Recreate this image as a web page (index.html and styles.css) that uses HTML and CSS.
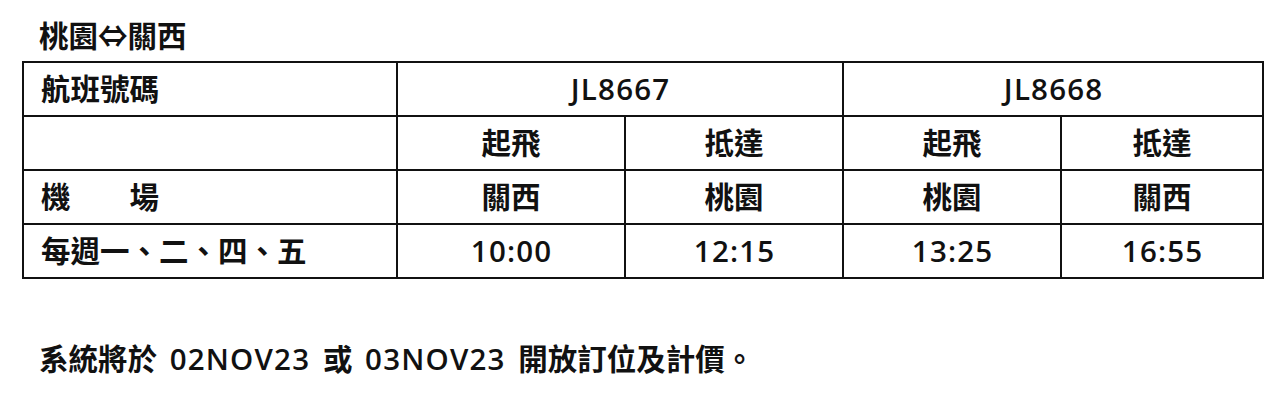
FILE: index.html
```html
<!DOCTYPE html>
<html lang="zh-Hant">
<head>
<meta charset="utf-8">
<link rel="stylesheet" href="styles.css">
</head>
<body>
<div class="page">
  <h1 class="title">桃園⇔關西</h1>
  <table class="sched">
    <colgroup>
      <col class="c0"><col class="c1"><col class="c2"><col class="c3"><col class="c4">
    </colgroup>
    <tr>
      <td class="lbl">航班號碼</td>
      <td class="num" colspan="2">JL8667</td>
      <td class="num" colspan="2">JL8668</td>
    </tr>
    <tr>
      <td class="lbl"></td>
      <td>起飛</td><td>抵達</td><td>起飛</td><td>抵達</td>
    </tr>
    <tr>
      <td class="lbl">機　　場</td>
      <td>關西</td><td>桃園</td><td>桃園</td><td>關西</td>
    </tr>
    <tr>
      <td class="lbl">每週一、二、四、五</td>
      <td class="num">10:00</td><td class="num">12:15</td><td class="num">13:25</td><td class="num">16:55</td>
    </tr>
  </table>
  <p class="note">系統將於 <span class="lat">02NOV23</span> 或 <span class="lat">03NOV23</span> 開放訂位及計價。</p>
</div>
</body>
</html>
```
FILE: styles.css
```css
html, body {
  margin: 0;
  padding: 0;
  background: #fff;
}
body {
  font-family: "Open Sans", "Noto Sans CJK TC", sans-serif;
  color: #111;
  font-weight: 600;
}
.page {
  padding: 17px 0 0 22px;
}
.title {
  margin: 0 0 6px 17px;
  font-size: 29.5px;
  line-height: 38px;
  font-weight: 600;
}
.sched {
  border-collapse: collapse;
  table-layout: fixed;
  width: 1240px;
  font-size: 29.5px;
}
.c0 { width: 374px; }
.c1 { width: 228px; }
.c2 { width: 218px; }
.c3 { width: 218px; }
.c4 { width: 202px; }
.sched td {
  border: 2px solid #111;
  height: 52px;
  padding: 0;
  text-align: center;
  vertical-align: middle;
  line-height: 1.2;
}
.sched td.num {
  letter-spacing: 1.2px;
  text-indent: 1.2px;
}
.sched td.lbl {
  text-align: left;
  padding-left: 17px;
}
.note {
  margin: 61px 0 0 17px;
  font-size: 29.5px;
  line-height: 38px;
  word-spacing: 5px;
}
.lat {
  letter-spacing: 1.2px;
}
```
